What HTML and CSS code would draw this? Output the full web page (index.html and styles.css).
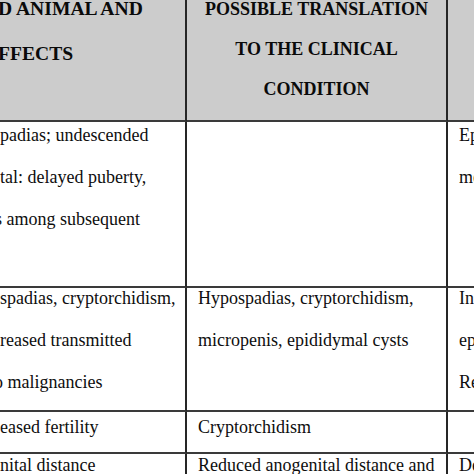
FILE: index.html
```html
<!DOCTYPE html>
<html lang="en">
<head>
<meta charset="utf-8">
<title>Table</title>
<link rel="stylesheet" href="styles.css">
</head>
<body>
<div class="viewport">
  <div class="table">
    <div class="cell head c1">
      <div class="hl">D ANIMAL AND</div>
      <div class="hl">FFECTS</div>
    </div>
    <div class="cell head c2">
      <div class="hl">POSSIBLE TRANSLATION</div>
      <div class="hl">TO THE CLINICAL</div>
      <div class="hl">CONDITION</div>
    </div>
    <div class="cell head c3"></div>

    <div class="cell r1 c1">
      <div class="ln">padias; undescended</div>
      <div class="ln">tal: delayed puberty,</div>
      <div class="ln cut5">s among subsequent</div>
    </div>
    <div class="cell r1 c2"></div>
    <div class="cell r1 c3">
      <div class="ln">Epididymal</div>
      <div class="ln">measures</div>
    </div>

    <div class="cell r2 c1">
      <div class="ln">spadias, cryptorchidism,</div>
      <div class="ln">reased transmitted</div>
      <div class="ln cut6">o malignancies</div>
    </div>
    <div class="cell r2 c2">
      <div class="ln">Hypospadias, cryptorchidism,</div>
      <div class="ln">micropenis, epididymal cysts</div>
    </div>
    <div class="cell r2 c3">
      <div class="ln">In utero</div>
      <div class="ln">epididymal</div>
      <div class="ln">Reduced</div>
    </div>

    <div class="cell r3 c1">
      <div class="ln">eased fertility</div>
    </div>
    <div class="cell r3 c2">
      <div class="ln">Cryptorchidism</div>
    </div>
    <div class="cell r3 c3"></div>

    <div class="cell r4 c1">
      <div class="ln">nital distance</div>
    </div>
    <div class="cell r4 c2">
      <div class="ln">Reduced anogenital distance and</div>
    </div>
    <div class="cell r4 c3">
      <div class="ln">Decreased</div>
    </div>
  </div>
</div>
</body>
</html>
```

FILE: styles.css
```css
html, body {
  margin: 0;
  padding: 0;
  background: #ffffff;
}

.viewport {
  width: 474px;
  height: 474px;
  overflow: hidden;
  position: relative;
}

.table {
  display: grid;
  grid-template-columns: 199px 261px 200px;
  grid-template-rows: 142px 166px 124px 42px 60px;
  margin-left: -12px;
  margin-top: -20px;
  font-family: "Liberation Serif", "Times New Roman", serif;
  font-size: 18px;
  color: #0e0e0e;
}

.cell {
  box-sizing: border-box;
  border-right: 2px solid #262626;
  border-bottom: 2px solid #3a3a3a;
  padding: 0 11px 0 12px;
  overflow: hidden;
  white-space: nowrap;
}

.c2, .c3 {
  padding-left: 11px;
}

.head {
  background: #cccccc;
  font-weight: bold;
  text-align: center;
  padding-top: 9px;
  color: #0a0a0a;
}

.head .hl {
  line-height: 40px;
}

.head.c1 {
  text-align: left;
  padding-top: 6px;
  padding-left: 10px;
  font-size: 19.6px;
}

.head.c1 .hl {
  line-height: 45px;
}

.r1 { padding-top: 3px; }
.r2 { padding-top: 0; }
.r3 { padding-top: 5px; }
.r4 { padding-top: 1px; }

.ln {
  line-height: 20px;
  margin-bottom: 22px;
}

.ln:last-child {
  margin-bottom: 0;
}

.cut5 {
  margin-left: -5px;
}

.cut6 {
  margin-left: -6px;
}
```
